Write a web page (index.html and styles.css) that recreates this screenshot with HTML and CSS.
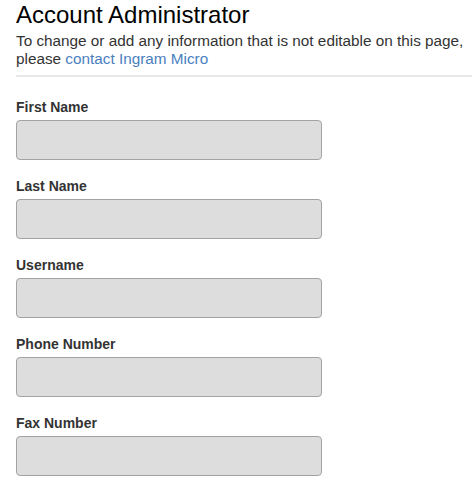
FILE: index.html
```html
<!DOCTYPE html>
<html>
<head>
<meta charset="utf-8">
<link rel="stylesheet" href="styles.css">
</head>
<body>
<div class="page">
  <h1 class="title">Account Administrator</h1>
  <p class="subtitle">To change or add any information that is not editable on this page, please <a href="#" class="link">contact Ingram Micro</a></p>
  <hr class="divider">
  <form class="form">
    <div class="group">
      <label class="label">First Name</label>
      <input class="field" type="text" disabled>
    </div>
    <div class="group">
      <label class="label">Last Name</label>
      <input class="field" type="text" disabled>
    </div>
    <div class="group">
      <label class="label">Username</label>
      <input class="field" type="text" disabled>
    </div>
    <div class="group">
      <label class="label">Phone Number</label>
      <input class="field" type="text" disabled>
    </div>
    <div class="group">
      <label class="label">Fax Number</label>
      <input class="field" type="text" disabled>
    </div>
  </form>
</div>
</body>
</html>
```
FILE: styles.css
```css
html, body {
  margin: 0;
  padding: 0;
  background: #ffffff;
}
body {
  font-family: "Liberation Sans", Arial, sans-serif;
  color: #333333;
  overflow: hidden;
}
.page {
  padding: 2px 0 0 16px;
}
.title {
  margin: 0;
  font-size: 24px;
  line-height: 26px;
  font-weight: normal;
  color: #000000;
}
.subtitle {
  margin: 4px 0 0 0;
  font-size: 15.3px;
  line-height: 18px;
  color: #333333;
}
.link {
  color: #4a80c0;
  text-decoration: none;
}
.divider {
  margin: 7px 0 0 0;
  border: 0;
  height: 2px;
  background: #e8e8e8;
}
.form {
  display: flex;
  flex-direction: column;
  gap: 16px;
  padding-top: 20px;
}
.group {
  display: flex;
  flex-direction: column;
  gap: 3px;
}
.label {
  font-size: 14px;
  line-height: 20px;
  font-weight: bold;
  color: #333333;
}
.field {
  box-sizing: border-box;
  width: 306px;
  height: 40px;
  margin: 0;
  background: #dddddd;
  border: 1px solid #a3a3a3;
  border-radius: 4px;
  font: inherit;
}
```
